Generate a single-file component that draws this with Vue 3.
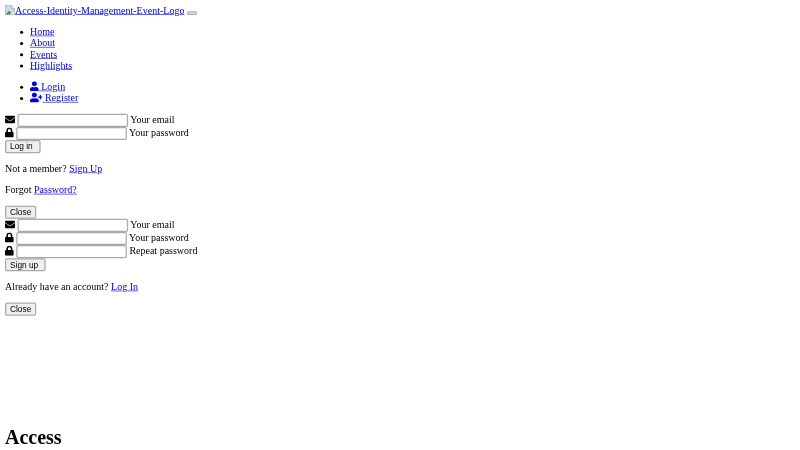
<script setup>
const navLinks = ["Home", "About", "Events", "Highlights"];
const icons = {
  envelope: { box: "0 0 512 512", d: "M502.3 190.8c3.9-3.1 9.7-.2 9.7 4.7V400c0 26.5-21.5 48-48 48H48c-26.5 0-48-21.5-48-48V195.6c0-5 5.7-7.8 9.7-4.7 22.4 17.4 52.1 39.5 154.1 113.6 21.1 15.4 56.7 47.8 92.2 47.6 35.7.3 72-32.8 92.3-47.6 102-74.1 131.6-96.3 154-113.7zM256 320c23.2.4 56.6-29.2 73.4-41.4 132.7-96.3 142.8-104.7 173.4-128.7 5.8-4.5 9.2-11.5 9.2-18.9v-19c0-26.5-21.5-48-48-48H48C21.5 64 0 85.5 0 112v19c0 7.4 3.4 14.3 9.2 18.9 30.6 23.9 40.7 32.4 173.4 128.7 16.8 12.2 50.2 41.8 73.4 41.4z" },
  lock: { box: "0 0 448 512", d: "M400 224h-24v-72C376 68.2 307.8 0 224 0S72 68.2 72 152v72H48c-26.5 0-48 21.5-48 48v192c0 26.5 21.5 48 48 48h352c26.5 0 48-21.5 48-48V272c0-26.5-21.5-48-48-48zm-104 0H152v-72c0-39.7 32.3-72 72-72s72 32.3 72 72v72z" },
  user: { box: "0 0 448 512", d: "M224 256c70.7 0 128-57.3 128-128S294.7 0 224 0 96 57.3 96 128s57.3 128 128 128zm89.6 32h-16.7c-22.2 10.2-46.9 16-72.9 16s-50.6-5.8-72.9-16h-16.7C60.2 288 0 348.2 0 422.4V464c0 26.5 21.5 48 48 48h352c26.5 0 48-21.5 48-48v-41.6c0-74.2-60.2-134.4-134.4-134.4z" },
  userPlus: { box: "0 0 640 512", d: "M624 208h-64v-64c0-8.8-7.2-16-16-16h-32c-8.8 0-16 7.2-16 16v64h-64c-8.8 0-16 7.2-16 16v32c0 8.8 7.2 16 16 16h64v64c0 8.8 7.2 16 16 16h32c8.8 0 16-7.2 16-16v-64h64c8.8 0 16-7.2 16-16v-32c0-8.8-7.2-16-16-16zm-400 48c70.7 0 128-57.3 128-128S294.7 0 224 0 96 57.3 96 128s57.3 128 128 128zm89.6 32h-16.7c-22.2 10.2-46.9 16-72.9 16s-50.6-5.8-72.9-16h-16.7C60.2 288 0 348.2 0 422.4V464c0 26.5 21.5 48 48 48h352c26.5 0 48-21.5 48-48v-41.6c0-74.2-60.2-134.4-134.4-134.4z" },
};
const loginFields = [
  { icon: "envelope", type: "email", label: "Your email" },
  { icon: "lock", type: "password", label: "Your password" },
];
const signupFields = [
  ...loginFields,
  { icon: "lock", type: "password", label: "Repeat password" },
];
</script>

<template>
  <div class="viewport">
    <div class="page">
      <nav>
        <a href="#" class="brand">
          <svg class="broken" viewBox="0 0 16 16" width="16" height="16">
            <path d="M.5.5h10l5 5v10H.5z" fill="#c8d8ee" stroke="#9a9a9a" />
            <path d="M10.5.5v5h5" fill="#f4f4f4" stroke="#9a9a9a" />
            <path d="M1 15l5-6 4 3-3 3z" fill="#4f9a3f" />
            <path d="M10 15l5-5v5z" fill="#e8eef6" />
          </svg>Access-Identity-Management-Event-Logo</a>
        {{ " " }}
        <button class="toggler" type="button"></button>
        <ul>
          <li v-for="link in navLinks" :key="link"><a href="#">{{ link }}</a></li>
        </ul>
        <ul>
          <li>
            <a href="#"><svg class="icon" :viewBox="icons.user.box" width="14" height="16"><path :d="icons.user.d" /></svg> Login</a>
          </li>
          <li>
            <a href="#"><svg class="icon" :viewBox="icons.userPlus.box" width="20" height="16"><path :d="icons.userPlus.d" /></svg> Register</a>
          </li>
        </ul>
      </nav>

      <form @submit.prevent>
        <div v-for="f in loginFields" :key="f.label">
          <svg class="icon" :viewBox="icons[f.icon].box" :width="f.icon === 'lock' ? 14 : 16" height="16"><path :d="icons[f.icon].d" /></svg>
          {{ " " }}<input :type="f.type" />
          {{ " " }}<label>{{ f.label }}</label>
        </div>
        <button type="submit" class="login">Log in</button>
        <p>Not a member? <a href="#">Sign Up</a></p>
        <p>Forgot <a href="#">Password?</a></p>
        <button type="button">Close</button>
      </form>

      <form @submit.prevent>
        <div v-for="f in signupFields" :key="f.label">
          <svg class="icon" :viewBox="icons[f.icon].box" :width="f.icon === 'lock' ? 14 : 16" height="16"><path :d="icons[f.icon].d" /></svg>
          {{ " " }}<input :type="f.type" />
          {{ " " }}<label>{{ f.label }}</label>
        </div>
        <button type="submit" class="signup">Sign up</button>
        <p>Already have an account? <a href="#">Log In</a></p>
        <button type="button">Close</button>
      </form>

      <h1>Access</h1>
    </div>
  </div>
</template>

<style scoped>
.viewport {
  width: 800px;
  height: 450px;
  overflow: hidden;
}
/* the whole page is a 1280 wide layout at 62.5% */
.page {
  width: 1280px;
  box-sizing: border-box;
  transform: scale(0.625);
  transform-origin: 0 0;
  filter: blur(0.45px);
  padding: 8px;
  font-family: "Liberation Serif", serif;
  font-size: 16px;
  color: #000;
}
a {
  color: #0000ee;
  text-decoration: underline;
}
ul {
  margin: 16px 0;
  padding-left: 40px;
}
.broken {
  vertical-align: -2px;
}
.icon {
  fill: currentColor;
  vertical-align: -2px;
}
input {
  width: 177px;
  height: 21px;
  box-sizing: border-box;
  padding: 1px 2px;
  margin: 0;
  border: 2px solid #aaa;
  border-radius: 3px;
  background: #fff;
}
button {
  font-family: "Liberation Sans", sans-serif;
  font-size: 13.333px;
  height: 21px;
  padding: 1px 6px;
  margin: 0;
  color: #000;
  background: #efefef;
  border: 2px solid #aaa;
  border-radius: 3px;
}
.login {
  padding-right: 11px;
}
.signup {
  padding-right: 10px;
}
.toggler {
  width: 16px;
  height: 6px;
  padding: 0;
}
p {
  margin: 16px 0;
}
h1 {
  font-size: 32px;
  font-weight: bold;
  margin: 176px 0 0;
}
</style>

<style>
html,
body {
  overflow: hidden;
  height: 450px;
}
</style>
